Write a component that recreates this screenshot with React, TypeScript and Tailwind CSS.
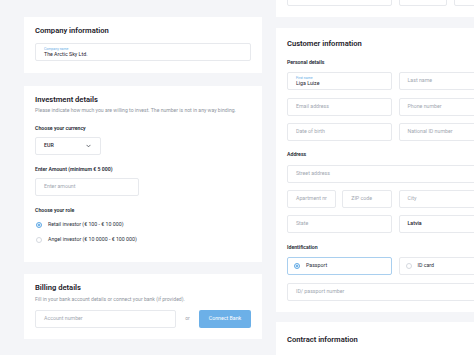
const font = { fontFamily: "Roboto, 'Liberation Sans', sans-serif" };

type FieldProps = { text: string; className?: string; filled?: boolean };

const Field = ({ text, className = "", filled = false }: FieldProps) => (
  <div
    className={`flex h-[18px] items-center rounded-[2px] border border-[#e7e9ed] bg-white px-[8px] text-[5.25px] ${
      filled ? "font-medium text-[#1f2430]" : "text-[#a2a8b1]"
    } ${className}`}
  >
    {text}
  </div>
);

const Radio = ({ checked }: { checked?: boolean }) =>
  checked ? (
    <span className="flex h-[6px] w-[6px] items-center justify-center rounded-full border border-[#62aae4] bg-[#e4f1fc]">
      <span className="h-[2.5px] w-[2.5px] rounded-full bg-[#4f9ee0]" />
    </span>
  ) : (
    <span className="h-[6px] w-[6px] rounded-full border border-[#d5d9df] bg-white" />
  );

const Title = ({ children }: { children: string }) => (
  <h2 className="text-[7.6px] leading-[10px] font-semibold text-[#1c2029]">{children}</h2>
);

const Label = ({ children, className = "" }: { children: string; className?: string }) => (
  <div className={`text-[5.2px] leading-[6px] font-semibold text-[#222733] ${className}`}>{children}</div>
);

export default function App() {
  return (
    <div className="h-[355px] w-[474px] overflow-hidden bg-[#f4f5f8]" style={font}>
      <div className="flex items-start gap-[14px] pl-[24px]">
        {/* left column */}
        <div className="mt-[17px] flex w-[238px] shrink-0 flex-col">
          <section className="bg-white px-[11px] pt-[9px] pb-[12px]">
            <Title>Company information</Title>
            <div className="mt-[7px] flex h-[18px] flex-col justify-center rounded-[2px] border border-[#e7e9ed] px-[8px]">
              <span className="text-[3.5px] leading-[4px] text-[#6aaee6]">Company name</span>
              <span className="text-[5.25px] leading-[7px] text-[#1f2430]">The Arctic Sky Ltd.</span>
            </div>
          </section>

          <section className="mt-[13px] bg-white px-[11px] pt-[9px] pb-[18px]">
            <Title>Investment details</Title>
            <p className="mt-[2px] text-[5.1px] leading-[6px] text-[#8f959e]">
              Please indicate how much you are willing to invest. The number is not in any way binding.
            </p>
            <Label className="mt-[12px]">Choose your currency</Label>
            <div className="mt-[6px] flex h-[18px] w-[66px] items-center justify-between rounded-[2px] border border-[#e7e9ed] px-[8px] text-[5.25px] font-medium text-[#1f2430]">
              <span>EUR</span>
              <svg width="5" height="4" viewBox="0 0 6 4" fill="none" className="mr-[1px]">
                <path d="M1 1l2 2 2-2" stroke="#3a3f4a" strokeWidth="0.9" strokeLinecap="round" strokeLinejoin="round" />
              </svg>
            </div>
            <Label className="mt-[11px]">Enter Amount (minimum € 5 000)</Label>
            <Field text="Enter amount" className="mt-[6px] w-[104px]" />
            <Label className="mt-[11px]">Choose your role</Label>
            <div className="mt-[8px] flex h-[8px] items-center gap-[6px] pl-[1px] text-[5.25px] text-[#2a2f3a]">
              <Radio checked />
              <span>Retail investor (€ 100 - € 10 000)</span>
            </div>
            <div className="mt-[7px] flex h-[8px] items-center gap-[6px] pl-[1px] text-[5.25px] text-[#2a2f3a]">
              <Radio />
              <span>Angel investor (€ 10 0000 - € 100 000)</span>
            </div>
          </section>

          <section className="mt-[12px] bg-white px-[11px] pt-[9px] pb-[11px]">
            <Title>Billing details</Title>
            <p className="mt-[3px] text-[5.1px] leading-[6px] text-[#8f959e]">
              Fill in your bank account details or connect your bank (if provided).
            </p>
            <div className="mt-[8px] flex items-center">
              <Field text="Account number" className="w-[141px]" />
              <span className="flex-1 text-center text-[5px] text-[#9aa0a9]">or</span>
              <button className="h-[18px] w-[52px] rounded-[2px] bg-[#6cb0e8] text-[5.25px] text-white">
                Connect Bank
              </button>
            </div>
          </section>
        </div>

        {/* right column */}
        <div className="-mt-[20px] flex w-[238px] shrink-0 flex-col">
          <section className="bg-white px-[11px] pt-[8px] pb-[11px]">
            <div className="grid grid-cols-2 gap-[7px]">
              <Field text="" />
              <div className="grid grid-cols-2 gap-[7px]">
                <Field text="" />
                <Field text="" />
              </div>
            </div>
          </section>

          <section className="mt-[11px] bg-white px-[11px] pt-[11px] pb-[11px]">
            <Title>Customer information</Title>
            <Label className="mt-[10px]">Personal details</Label>
            <div className="mt-[7px] grid grid-cols-2 gap-x-[7px] gap-y-[7.5px]">
              <div className="flex h-[18px] flex-col justify-center rounded-[2px] border border-[#e7e9ed] px-[8px]">
                <span className="text-[3.5px] leading-[4px] text-[#6aaee6]">First name</span>
                <span className="text-[5.25px] leading-[7px] text-[#1f2430]">Liga Luize</span>
              </div>
              <Field text="Last name" />
              <Field text="Email address" />
              <Field text="Phone number" />
              <Field text="Date of birth" />
              <Field text="National  ID number" />
            </div>
            <Label className="mt-[10px]">Address</Label>
            <Field text="Street address" className="mt-[8px]" />
            <div className="mt-[7px] grid grid-cols-2 gap-x-[7px] gap-y-[7px]">
              <div className="grid grid-cols-2 gap-[6px]">
                <Field text="Apartment nr" />
                <Field text="ZIP code" />
              </div>
              <Field text="City" />
              <Field text="State" />
              <Field text="Latvia" filled />
            </div>
            <Label className="mt-[11px]">Identification</Label>
            <div className="mt-[7px] grid grid-cols-2 gap-[7px]">
              <div className="flex h-[18px] items-center gap-[6px] rounded-[2px] border border-[#a9cfef] px-[6px] text-[5.25px] text-[#2a2f3a]">
                <Radio checked />
                <span>Passport</span>
              </div>
              <div className="flex h-[18px] items-center gap-[6px] rounded-[2px] border border-[#e7e9ed] px-[6px] text-[5.25px] text-[#2a2f3a]">
                <Radio />
                <span>ID card</span>
              </div>
            </div>
            <Field text="ID/ passport number" className="mt-[8px]" />
          </section>

          <section className="mt-[10px] bg-white px-[11px] pt-[13px] pb-[20px]">
            <Title>Contract information</Title>
          </section>
        </div>
      </div>
    </div>
  );
}
